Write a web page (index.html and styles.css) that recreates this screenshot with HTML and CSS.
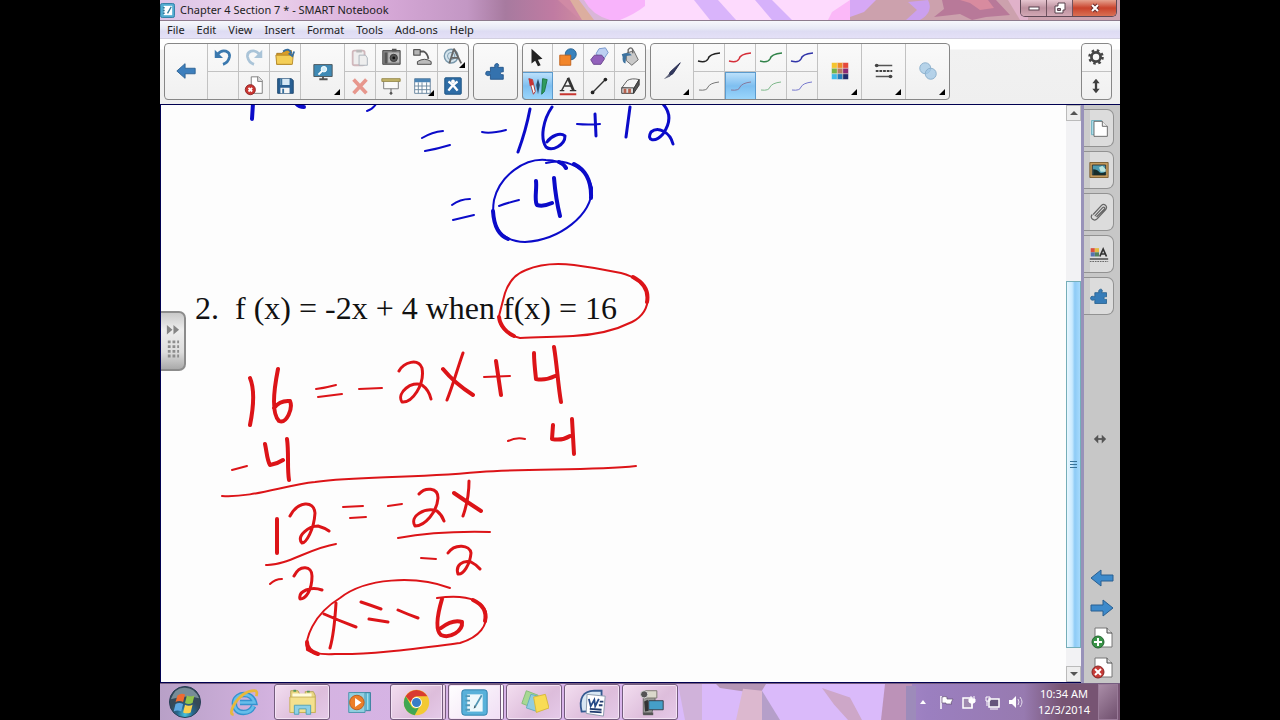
FILE: index.html
```html
<!DOCTYPE html>
<html lang="en">
<head>
<meta charset="utf-8">
<meta name="viewport" content="width=device-width, initial-scale=1">
<title>Chapter 4 Section 7 * - SMART Notebook</title>
<link rel="stylesheet" href="styles.css">
</head>
<body>
<div class="screen">
  <header class="titlebar">
    <svg class="wallpaper" viewBox="0 0 960 20" preserveAspectRatio="none" aria-hidden="true">
      <defs>
        <linearGradient id="sky"><stop offset="0" stop-color="#dcc3e6"/><stop offset=".1" stop-color="#edd6ee"/><stop offset=".23" stop-color="#d7a9d8"/><stop offset=".32" stop-color="#c397c4"/><stop offset=".36" stop-color="#a77a9f"/><stop offset=".41" stop-color="#c07ba2"/><stop offset=".46" stop-color="#d7959f"/></linearGradient>
      </defs>
      <path d="M0 0H960V20H0Z" fill="url(#sky)"/>
      <path d="M398 0H440L455 20H420Z" fill="#d08aa5"/>
      <path d="M410 0H500V20H422Z" fill="#dcae9f"/>
      <path d="M419 0H500V20H434Z" fill="#d9b6d8"/>
      <path d="M424 0H540V20H450Q432 15 424 0Z" fill="#f8b3fb"/>
      <path d="M485 0H850V20H460Q475 14 485 6Z" fill="#fddafd"/>
      <path d="M534 0H558L576 20H550Z" fill="#d9b4fb"/>
      <path d="M595 0H612L632 20H612Z" fill="#d6b1fb"/>
      <path d="M672 12L690 0H700V20H668Z" fill="#fbb8f8"/>
      <path d="M690 0H960V20H690Z" fill="#cca1ad"/>
      <path d="M690 0H716L704 12L690 17Z" fill="#d6a8f5"/>
      <path d="M748 2L768 0Q774 12 760 20H746L757 10Z" fill="#cba0ee"/>
      <path d="M782 0H836L850 15L826 17L812 20L800 14L774 17L784 9Z" fill="#b87999"/>
      <path d="M800 0L828 0L834 8L820 10L810 3Z" fill="#d88b9f"/>
      <path d="M848 0H868V20H860Z" fill="#e0b1c9"/>
    </svg>
    <svg class="title-icon" viewBox="0 0 16 16" aria-hidden="true"><rect x=".5" y=".5" width="15" height="15" rx="2" fill="#53add2" stroke="#307da4"/><path d="M4 3h9v10H4z" fill="#fff"/><path d="M3 5h2M3 8h2M3 11h2M8 11l4-7" stroke="#367b9c" stroke-width="1.5"/></svg>
    <h1 class="title">Chapter 4 Section 7 * - SMART Notebook</h1>
    <div class="window-buttons">
      <button class="winbtn" aria-label="Minimize"><svg viewBox="0 0 16 12"><rect x="3" y="5" width="10" height="3" fill="#fff" stroke="#59424f"/></svg></button>
      <button class="winbtn" aria-label="Restore"><svg viewBox="0 0 16 12"><path d="M6 1h7v7h-2v3H3V4h3z" fill="#fff" stroke="#59424f"/><path d="M5.500 6.500h3v2h-3z" fill="#a98b9b" stroke="#59424f"/></svg></button>
      <button class="winbtn close" aria-label="Close"><svg viewBox="0 0 16 12"><path d="M5 3l6 6M11 3l-6 6" stroke="#6b2b2b" stroke-width="4"/><path d="M5 3l6 6M11 3l-6 6" stroke="#fff" stroke-width="2"/></svg></button>
    </div>
  </header>

  <nav class="menubar" aria-label="Menu">
    <button>File</button><button>Edit</button><button>View</button><button>Insert</button><button>Format</button><button>Tools</button><button>Add-ons</button><button>Help</button>
  </nav>

  <div class="toolbar" role="toolbar" aria-label="Notebook tools">
    <div class="group group-main">
      <button class="tool tall" aria-label="Previous page"><svg viewBox="0 0 24 24"><path d="M2 12l9-8v5h11v6H11v5z" fill="#3d7fbd" stroke="#2c6193"/></svg></button>
      <button class="tool" aria-label="Undo"><svg viewBox="0 0 24 24"><path d="M6 9C12 2 20 6 19 12 18 17 15 19 12 20" fill="none" stroke="#3a78ae" stroke-width="3"/><path d="M3 4v9h9z" fill="#3a78ae"/></svg></button>
      <button class="tool" aria-label="Blank" disabled></button>
      <button class="tool" aria-label="Redo" disabled><svg viewBox="0 0 24 24"><path d="M18 9C12 2 4 6 5 12 6 17 9 19 12 20" fill="none" stroke="#aac4d8" stroke-width="3"/><path d="M21 4v9h-9z" fill="#aac4d8"/></svg></button>
      <button class="tool" aria-label="Delete page"><svg viewBox="0 0 24 24"><path d="M9 2h8l4 4v14H9z" fill="#fff" stroke="#777"/><path d="M16 2v5h5" fill="#ddd" stroke="#777"/><circle cx="8" cy="16" r="5.500" fill="#c93632" stroke="#8e2526"/><path d="M6 14l4 4m0-4l-4 4" stroke="#fff" stroke-width="2"/></svg></button>
      <button class="tool" aria-label="Open"><svg viewBox="0 0 24 24"><path d="M3 8h6l2-3h8v15H3z" fill="#d99d26" stroke="#a77a24"/><path d="M2 10h19l-1 10H3z" fill="#f4ce57" stroke="#b68b2c"/><path d="M10 6Q16 1 19 8m3-2l-2 5-4-3" fill="none" stroke="#386e9d" stroke-width="2"/></svg></button>
      <button class="tool" aria-label="Save"><svg viewBox="0 0 24 24"><path d="M4 4h15l2 2v14H4z" fill="#285f93" stroke="#1d456c"/><path d="M7 4h10v7H7z" fill="#d5e8f5"/><path d="M7 14h10v6H7z" fill="#f6f6f6"/><path d="M9 15h2v5H9zM7 4h2v7H7z" fill="#38719d"/></svg></button>
      <button class="tool tall drop" aria-label="View screens"><svg viewBox="0 0 24 24"><path d="M2 5h20v13H2z" fill="#3f8ab5" stroke="#4b5459"/><path d="M8 21h9M12 18v3" stroke="#555" stroke-width="2"/><circle cx="13" cy="10" r="3" fill="#d2effa" stroke="#fff"/><path d="M11 12l-4 4" stroke="#fff" stroke-width="2"/></svg></button>
      <button class="tool" aria-label="Paste" disabled><svg viewBox="0 0 24 24"><rect x="4" y="5" width="13" height="16" rx="2" fill="#eee" stroke="#d0b8bc" stroke-width="2"/><path d="M8 4h6v3H8z" fill="#b9b9b9"/><path d="M11 10h7l2 3v8h-9z" fill="#eee" stroke="#a8b1b9"/></svg></button>
      <button class="tool" aria-label="Delete" disabled><svg viewBox="0 0 24 24"><path d="M5 5l14 15M19 5L5 20" stroke="#e7978d" stroke-width="4"/></svg></button>
      <button class="tool" aria-label="Screen capture"><svg viewBox="0 0 24 24"><path d="M3 5h19v15H3z" fill="#858585" stroke="#444"/><path d="M5 7h3v12H5zM13 3h5v3h-5z" fill="#555"/><path d="M9 7h12v11H9z" fill="#b9b9b9"/><circle cx="15" cy="13" r="4" fill="#555" stroke="#393939"/><circle cx="15" cy="13" r="1.500" fill="#111"/></svg></button>
      <button class="tool" aria-label="Screen shade"><svg viewBox="0 0 24 24"><path d="M4 6h16v9H4z" fill="#fafafa" stroke="#777"/><path d="M2 4h20v3H2z" fill="#c4b56a" stroke="#96894c"/><path d="M12 15v6" stroke="#555"/><circle cx="12" cy="20" r="1.500" fill="#555"/></svg></button>
      <button class="tool" aria-label="Document camera"><svg viewBox="0 0 24 24"><path d="M9 6h5q4 2 5 8" fill="none" stroke="#555" stroke-width="2"/><rect x="3" y="4" width="7" height="6" fill="#b5b5b5" stroke="#333"/><path d="M7 17q8-5 15 0v3H7z" fill="#bbb" stroke="#444"/></svg></button>
      <button class="tool drop small" aria-label="Table"><svg viewBox="0 0 24 24"><path d="M4 4h17v16H4z" fill="#fff" stroke="#64819b"/><path d="M4 4h17v4H4z" fill="#4b84b5"/><path d="M4 12h17M4 16h17M8 8v12M12 8v12M17 8v12" stroke="#6a879e"/></svg></button>
      <button class="tool drop small" aria-label="Measurement tools"><svg viewBox="0 0 24 24"><circle cx="10" cy="11" r="7.500" fill="#d4e4ed" stroke="#7a99ad" stroke-width="1.500"/><circle cx="10" cy="11" r="4" fill="none" stroke="#7a99ad"/><path d="M13 3l-5 16M13 3l8 16M10 13h8" fill="none" stroke="#666" stroke-width="2"/></svg></button>
      <button class="tool" aria-label="Exchange"><svg viewBox="0 0 24 24"><rect x="3" y="3" width="18" height="18" rx="1" fill="#2e6da6" stroke="#1c5280"/><path d="M7 7q5 3 10 10M17 7q-5 3-10 10" fill="none" stroke="#fff" stroke-width="2.500"/><circle cx="12" cy="7" r="2" fill="#fff"/></svg></button>
    </div>
    <div class="group group-solo">
      <button class="tool tall" aria-label="Add-ons"><svg viewBox="0 0 24 24"><path d="M7 8h5c-2-4 4-6 4-2l-1 2h6v5c-4-1-4 4 0 3v5H7v-5c-2 2-6 1-5-2 0-2 3-2 5-1z" fill="#3472ae" stroke="#25578b"/></svg></button>
    </div>
    <div class="group group-tools">
      <button class="tool" aria-label="Select"><svg viewBox="0 0 24 24"><path d="M6 3l12 11-5 1 3 6-3 1-3-6-4 3z" fill="#222"/></svg></button>
      <button class="tool selected" aria-label="Pens" aria-pressed="true"><svg viewBox="0 0 24 24"><path d="M2 4l4 1 3 13-2 3z" fill="#fff" stroke="#a33"/><path d="M2 4l4 1 1 6-4 1z" fill="#c83535"/><path d="M12 4l2 7-2 10-2-10z" fill="#28506e"/><path d="M17 4l5 1-3 13-3 3z" fill="#2f9b5e" stroke="#1d7442"/></svg></button>
      <button class="tool" aria-label="Shapes"><svg viewBox="0 0 24 24"><circle cx="15" cy="9" r="6" fill="#3982bd" stroke="#286290"/><path d="M3 10h12v11H3z" fill="#f2862b" stroke="#bf601a"/></svg></button>
      <button class="tool" aria-label="Text"><svg viewBox="0 0 24 24"><path d="M5 17L12 4" fill="none" stroke="#333" stroke-width="1.500"/><path d="M12 3l6 14" stroke="#333" stroke-width="3"/><path d="M8 12h8M3 17h5m6 0h7" stroke="#333" stroke-width="1.500"/><path d="M3 21h18" stroke="#c73631" stroke-width="2"/></svg></button>
      <button class="tool" aria-label="Regular polygons"><svg viewBox="0 0 24 24"><path d="M12 3l7-1 3 5-4 6h-7L9 8z" fill="#bdd0f2" stroke="#7495ca"/><path d="M7 10h8l3 4-4 6H6l-3-5z" fill="#9261bb" stroke="#66418b"/></svg></button>
      <button class="tool" aria-label="Line"><svg viewBox="0 0 24 24"><path d="M5 19L19 5" stroke="#333" stroke-width="1.500"/><circle cx="5" cy="19" r="2" fill="#222"/><circle cx="19" cy="5" r="2" fill="#222"/></svg></button>
      <button class="tool" aria-label="Fill"><svg viewBox="0 0 24 24"><path d="M8 8l8-3 5 10-7 6-6-5z" fill="#c9c9c9" stroke="#666"/><path d="M10 8V4q3-4 5 0v4" fill="none" stroke="#666" stroke-width="1.500"/><path d="M3 9q8-3 11 1l-6 1-1 8q-4-1-3-7z" fill="#3e739f"/></svg></button>
      <button class="tool" aria-label="Eraser"><svg viewBox="0 0 24 24"><path d="M3 14L9 6q5-3 13-1l-6 10z" fill="#f5f5f5" stroke="#555"/><path d="M3 14h13v6H3z" fill="#ddd" stroke="#333"/><path d="M16 15l6-10v6l-6 9z" fill="#555" stroke="#333"/><path d="M5 15h3v5H5zM10 15h3v5h-3z" fill="#b66350"/></svg></button>
    </div>
    <div class="group group-pens">
      <button class="tool tall drop" aria-label="Pen type"><svg viewBox="0 0 24 24"><path d="M21 3L10 13l-2 5 5-3z" fill="#33395f" stroke="#22274d"/><path d="M9 15l-6 6 7-3z" fill="#62677d"/></svg></button>
      <button class="tool pen" aria-label="Black pen"><svg viewBox="0 0 24 24"><path d="M1 16q8 2 10-2 1-5 12-6" stroke="#222" fill="none" stroke-width="1.500"/></svg></button>
      <button class="tool pen" aria-label="Thin black pen"><svg viewBox="0 0 24 24"><path d="M2 16q8 1 9-3 2-4 11-5" stroke="#777" fill="none"/></svg></button>
      <button class="tool pen" aria-label="Red pen"><svg viewBox="0 0 24 24"><path d="M1 16q8 2 10-2 1-5 12-6" stroke="#d52e39" fill="none" stroke-width="1.500"/></svg></button>
      <button class="tool pen selected" aria-label="Thin red pen" aria-pressed="true"><svg viewBox="0 0 24 24"><path d="M2 16q8 1 9-3 2-4 11-5" stroke="#87799d" fill="none"/></svg></button>
      <button class="tool pen" aria-label="Green pen"><svg viewBox="0 0 24 24"><path d="M1 16q8 2 10-2 1-5 12-6" stroke="#32834a" fill="none" stroke-width="1.500"/></svg></button>
      <button class="tool pen" aria-label="Thin green pen"><svg viewBox="0 0 24 24"><path d="M2 16q8 1 9-3 2-4 11-5" stroke="#7eb88b" fill="none"/></svg></button>
      <button class="tool pen" aria-label="Blue pen"><svg viewBox="0 0 24 24"><path d="M1 16q8 2 10-2 1-5 12-6" stroke="#3135a9" fill="none" stroke-width="1.500"/></svg></button>
      <button class="tool pen" aria-label="Thin blue pen"><svg viewBox="0 0 24 24"><path d="M2 16q8 1 9-3 2-4 11-5" stroke="#7779ce" fill="none"/></svg></button>
      <button class="tool tall drop" aria-label="Color"><svg viewBox="0 0 24 24"><path d="M3 3h6v6H3z" fill="#f4c52d"/><path d="M9 3h6v6H9z" fill="#ee8a29"/><path d="M15 3h6v6h-6z" fill="#e5483b"/><path d="M3 9h6v6H3z" fill="#75b348"/><path d="M9 9h6v6H9z" fill="#b77965"/><path d="M15 9h6v6h-6z" fill="#8c2873"/><path d="M3 15h6v6H3z" fill="#40bbe9"/><path d="M9 15h6v6H9z" fill="#267bbb"/><path d="M15 15h6v6h-6z" fill="#202a6c"/><path d="M9 3v18M15 3v18M3 9h18M3 15h18" stroke="#f1dfc9" stroke-width=".6"/></svg></button>
      <button class="tool tall drop" aria-label="Line style"><svg viewBox="0 0 24 24"><path d="M3 6h18M3 18h18" stroke="#555" stroke-width="1.500"/><path d="M3 12h18" stroke="#444" stroke-width="2" stroke-dasharray="3 1"/><circle cx="4" cy="6" r="2" fill="#444"/><circle cx="19" cy="18" r="2" fill="#444"/></svg></button>
      <button class="tool tall drop" aria-label="Transparency"><svg viewBox="0 0 24 24"><circle cx="9" cy="9" r="6" fill="#b6d3e9" stroke="#8aaecb"/><circle cx="15" cy="15" r="6" fill="#9fc5e4" fill-opacity=".75" stroke="#8aaecb"/></svg></button>
    </div>
    <div class="group group-settings">
      <button class="tool" aria-label="Settings"><svg viewBox="0 0 24 24"><circle cx="12" cy="12" r="5" fill="none" stroke="#454545" stroke-width="3"/><circle cx="12" cy="12" r="7" fill="none" stroke="#454545" stroke-width="3" stroke-dasharray="2.700 2.800"/></svg></button>
      <button class="tool" aria-label="Move toolbar"><svg viewBox="0 0 24 24"><path d="M12 6v12" stroke="#3f3f3f" stroke-width="2.500"/><path d="M12 4l4 5H8zM12 20l4-5H8z" fill="#3f3f3f"/></svg></button>
    </div>
  </div>

  <div class="workspace">
    <main class="page">
      <button class="pull-tab" aria-label="Show page tab"><svg viewBox="0 0 16 40"><path d="M2 3l6 5-6 5zM9 3l6 5-6 5z" fill="#858585"/><path d="M3 21h12M3 26h12M3 31h12M3 36h12" stroke="#8d8d8d" stroke-width="3" stroke-dasharray="3 2"/></svg></button>
      <p class="problem">2.&nbsp; f (x) = -2x + 4 when f(x) = 16</p>
      <svg class="ink" viewBox="161 105 500 560" role="img" aria-label="Handwritten work">
        <g class="blue">
          <path class="bold" d="M253 103L252 119M295 102Q298 107 304 107M536 181C537 190 534 200 537 205Q543 207 552 203M554 178C555 190 557 204 560 216"/>
          <path class="medium" d="M530 109Q526 130 518 152M552 107C543 120 540 138 546 147C552 152 565 145 565 136C560 132 551 136 547 142M595 114L596 136M630 107L626 137M663 104C672 114 670 124 663 134C655 143 646 141 651 132C658 126 670 132 673 144"/>
          <path d="M376 104Q373 109 367 111M422 138Q432 132 443 131M425 151Q437 149 450 145M482 132Q490 134 506 130M577 124Q588 125 600 124M452 205Q460 199 470 199M453 220L474 215M499 206Q507 203 519 200"/>
          <path d="M546 163C568 157 588 170 592 188C592 215 560 240 525 242C500 241 490 225 494 200C500 175 525 158 546 160C555 160 562 163 566 168"/>
          <path class="bold" d="M559 162Q564 164 566 168M574 164Q592 173 591 198M493 211C494 227 500 236 508 239"/>
        </g>
        <g class="red">
          <path d="M505 293C509 281 515 274 526 270C540 264 558 263 574 265C590 267 607 270 621 273C634 276 647 285 648 296C648 306 644 316 632 322C614 331 595 335 573 336C552 337 536 337 520 338C509 336 498 327 499 316Q502 304 505 293"/>
          <path class="bold" d="M499 317C500 326 507 333 514 336M633 277Q650 286 647 302"/>
          <path class="bold" d="M250 378C255 390 253 410 250 425M278 369C275 384 270 412 279 421C287 424 293 408 290 401Q280 400 274 408M443 369C452 380 462 388 473 395M496 361L501 395M534 353C534 360 535 370 536 379Q545 381 555 376M554 347C557 365 558 385 561 402M265 444C267 453 267 460 270 465Q277 464 283 460M287 439C289 453 287 468 289 480M553 425L552 439Q562 441 570 436M572 419L574 454M277 519L277 553M454 493Q467 502 481 511"/>
          <path class="medium" d="M463 353C457 370 453 385 447 400M399 371C404 362 418 358 422 368C425 385 412 403 402 402C396 393 412 380 422 385Q429 390 431 399M290 516C298 501 314 500 315 513C314 530 306 543 302 543C296 536 309 526 318 526Q325 528 329 531M294 576C300 564 312 566 312 576C312 590 306 599 300 599C298 591 311 586 322 590M419 494C425 487 438 487 438 498C437 512 425 526 415 526C409 516 425 507 437 511Q442 515 444 521M469 481Q469 499 463 516M448 553C455 543 470 545 471 553C470 565 463 575 458 574C455 565 463 560 471 562Q477 565 480 569M324 614Q340 621 356 627M336 603C335 620 334 634 330 648M361 602Q370 605 381 609M398 610Q407 614 418 618M369 619L388 622"/>
          <path d="M316 389Q325 388 336 385M318 397L342 394M359 389L382 388M484 377L510 376M232 470L247 466M508 441Q516 437 525 439M343 507L363 506M350 518L366 517M388 506L402 504M270 584Q275 579 282 579M421 558L436 559"/>
          <path d="M222 496C252 498 285 485 315 482C361 476 400 479 480 472C530 468 590 471 636 466M266 565C286 566 310 548 336 544M398 538C425 533 450 531 490 532"/>
          <path d="M450 588C415 575 365 578 340 598C312 615 305 640 307 650Q315 655 335 654C370 655 420 648 460 643C480 637 488 625 486 612C480 597 460 595 437 598"/>
          <path class="bold" d="M307 642Q307 651 318 654M442 599C437 616 435 630 441 635C450 639 463 631 462 622Q453 619 441 628M473 600Q488 607 485 621"/>
        </g>
      </svg>
    </main>
    <div class="scrollbar">
      <button class="scroll-button" aria-label="Scroll up"><svg viewBox="0 0 8 8"><path d="M0 6l4-4 4 4z" fill="#555"/></svg></button>
      <div class="track-before"></div>
      <div class="thumb"><i class="grip"></i></div>
      <div class="track-after"></div>
      <button class="scroll-button" aria-label="Scroll down"><svg viewBox="0 0 8 8"><path d="M0 2l4 4 4-4z" fill="#555"/></svg></button>
    </div>
    <aside class="sidebar">
      <div class="tabs">
        <button class="tab" aria-label="Page sorter"><svg viewBox="0 0 24 24"><path d="M3 3h12v17H3z" fill="#a9dce9" stroke="#68aebe"/><path d="M6 4h10l6 6v12H6z" fill="#fff" stroke="#555"/><path d="M16 4v6h6" fill="#eee" stroke="#555"/></svg></button>
        <button class="tab" aria-label="Gallery"><svg viewBox="0 0 24 24"><path d="M1 3h22v18H1z" fill="#c39a5c" stroke="#745427"/><path d="M4 6h16v12H4z" fill="#4e9cb1" stroke="#2a2a2a"/><path d="M5 11q5 0 7 3t8 0v4H5z" fill="#172d2b"/><path d="M12 9l4-2 4 4v3h-6z" fill="#bbe4dc"/></svg></button>
        <button class="tab" aria-label="Attachments"><svg viewBox="0 0 24 24"><path d="M5 15L15 4c3-3 8 1 5 5L10 20c-4 4-10-1-6-5M7 17l9-10c2-2 4 0 2 2l-9 9" fill="none" stroke="#666" stroke-width="1.500"/></svg></button>
        <button class="tab" aria-label="Properties"><svg viewBox="0 0 24 24"><path d="M2 5h5v5H2z" fill="#dc503d"/><path d="M7 5h5v5H7z" fill="#e4bc42"/><path d="M2 10h5v5H2z" fill="#5773af"/><path d="M7 10h5v5H7z" fill="#548360"/><path d="M13 15l4-9 4 9M15 12h5" fill="none" stroke="#333" stroke-width="2"/><path d="M1 18h22" stroke="#333" stroke-width="1.500"/><path d="M1 21h22" stroke="#555" stroke-dasharray="2 1"/></svg></button>
        <button class="tab" aria-label="Add-ons tab"><svg viewBox="0 0 24 24"><path d="M7 8h5c-2-4 4-6 4-2l-1 2h6v5c-4-1-4 4 0 3v5H7v-5c-2 2-6 1-5-2 0-2 3-2 5-1z" fill="#367cb8" stroke="#28618f"/></svg></button>
      </div>
      <button class="resize" aria-label="Resize sidebar"><svg viewBox="0 0 16 12"><path d="M4 6h8" stroke="#555" stroke-width="2"/><path d="M6 1v10L1 6zM10 1v10l5-5z" fill="#555"/></svg></button>
      <div class="page-actions">
        <button aria-label="Go to previous page"><svg viewBox="0 0 24 24"><path d="M1 12l10-8v5h12v6H11v5z" fill="#3d8acb" stroke="#285f91"/></svg></button>
        <button aria-label="Go to next page"><svg viewBox="0 0 24 24"><path d="M23 12L13 4v5H1v6h12v5z" fill="#3d8acb" stroke="#285f91"/></svg></button>
        <button aria-label="Add page"><svg viewBox="0 0 24 24"><path d="M5 2h12l5 5v14H5z" fill="#fff" stroke="#777"/><path d="M17 2v5h5" fill="#ddd" stroke="#444"/><circle cx="8" cy="16" r="6" fill="#399347" stroke="#226430"/><path d="M8 12v8M4 16h8" stroke="#fff" stroke-width="2"/></svg></button>
        <button aria-label="Delete current page"><svg viewBox="0 0 24 24"><path d="M5 2h12l5 5v14H5z" fill="#fff" stroke="#777"/><path d="M17 2v5h5" fill="#ddd" stroke="#444"/><circle cx="8" cy="16" r="6" fill="#c63b37" stroke="#872725"/><path d="M5 13l6 6m0-6l-6 6" stroke="#fff" stroke-width="2"/></svg></button>
      </div>
    </aside>
  </div>

  <footer class="taskbar">
    <svg class="wallpaper" viewBox="0 0 960 37" preserveAspectRatio="none" aria-hidden="true">
      <defs><linearGradient id="bar"><stop offset="0" stop-color="#b8a0c7"/><stop offset=".12" stop-color="#d4b3e0"/><stop offset=".55" stop-color="#dab5ee"/><stop offset=".8" stop-color="#9b7fc0"/><stop offset=".9" stop-color="#977ab0"/><stop offset=".94" stop-color="#775473"/></linearGradient></defs>
      <path d="M0 0H960V37H0Z" fill="url(#bar)"/>
      <path d="M518 0H728V37H518Z" fill="#dabafa"/>
      <path d="M518 0H542V37H525Z" fill="#d0b2da"/>
      <path d="M556 0H606L600 10L560 4Z" fill="#b595b5"/>
      <path d="M583 5L602 7V37H576Z" fill="#dcb8cf"/>
      <path d="M602 7L620 37H602Z" fill="#b59fc9"/>
      <path d="M662 4L690 14L702 37H688L674 21Z" fill="#cda7c8"/>
      <path d="M725 0H752V37H721Z" fill="#bc92b8"/>
      <path d="M746 2H756V37H746Z" fill="#9d8bba"/>
    </svg>
    <div class="apps">
      <button class="app start" aria-label="Start"><svg viewBox="0 0 36 36"><defs><radialGradient id="orb" cy=".9"><stop stop-color="#46c5df"/><stop offset=".5" stop-color="#27678e"/><stop offset="1" stop-color="#354958"/></radialGradient></defs><circle cx="18" cy="18" r="16.500" fill="url(#orb)" stroke="#273f56"/><path d="M3 15Q8 2 18 3q10 0 15 11-14-4-30 1z" fill="#bad0d7" opacity=".5"/><path d="M10 11q4-3 8-1l-2 8q-4-2-8 0z" fill="#ef6b31"/><path d="M20 11q4 2 8 0l-2 8q-4 2-8 0z" fill="#91c44b"/><path d="M8 20q4-2 8 0l-2 8q-4-2-8 0z" fill="#5ea9e3"/><path d="M18 21q4 2 8 0l-2 8q-4 2-8 0z" fill="#fbd04f"/></svg></button>
      <button class="app" aria-label="Internet Explorer"><svg viewBox="0 0 32 32"><path d="M26 20q-3 7-11 7C7 27 4 21 5 15 7 5 24 4 27 16H11" fill="none" stroke="#3492cf" stroke-width="6"/><path d="M26 20q-3 7-11 7C7 27 4 21 5 15 7 5 24 4 27 16H11" fill="none" stroke="#65bdea" stroke-width="3"/><path d="M4 29Q-1 30 4 19 14 3 27 3q4 0 2 6" fill="none" stroke="#e8b83c" stroke-width="3"/></svg></button>
      <button class="app open" aria-label="File Explorer"><svg viewBox="0 0 32 32"><path d="M3 7V3h8l2 4h6V4h9l2 4v19H3z" fill="#ead783" stroke="#b5a354"/><path d="M5 6h21v6H5z" fill="#fffbdc"/><path d="M2 10h28v17H2z" fill="#f4e18e" stroke="#c7ae57"/><path d="M6 3h3M21 4h3" stroke="#55985b" stroke-width="2"/><path d="M7 29V19h18v10h-5v-6h-8v6z" fill="#8dd0e7" stroke="#4b9fb8"/></svg></button>
      <button class="app" aria-label="Media Player"><svg viewBox="0 0 32 32"><path d="M9 5h18v20H9z" fill="#5bb4d2" stroke="#377f9b"/><path d="M24 6v18M21 6v19" stroke="#c5f1fa"/><path d="M3 5h18v22H3z" fill="#90cfe0" stroke="#4692aa"/><circle cx="12" cy="16" r="8" fill="#ec7e28" stroke="#b8591e"/><path d="M10 11l7 5-7 5z" fill="#fff"/></svg></button>
      <button class="app open stacked" aria-label="Chrome"><svg viewBox="0 0 32 32"><circle cx="16" cy="16" r="14" fill="#f3c934"/><path d="M4 9A14 14 0 0128 9H16a6 6 0 00-5 8z" fill="#d93c30"/><path d="M4 9l7 12q3 3 8 0l-5 9A14 14 0 014 9z" fill="#41a653"/><circle cx="16" cy="16" r="6" fill="#fff"/><circle cx="16" cy="16" r="5" fill="#397dc7"/></svg></button>
      <button class="app open active stacked" aria-label="SMART Notebook"><svg viewBox="0 0 32 32"><rect x="2" y="2" width="28" height="28" rx="3" fill="#59b1da" stroke="#2b7da8"/><path d="M8 7h17v19H8z" fill="#eef8fc"/><path d="M6 9h5M6 14h5M6 19h5M6 24h5M17 20l7-12" stroke="#5297b5" stroke-width="2"/><path d="M15 23l1-4 2 2z" fill="#355b6b"/></svg></button>
      <button class="app open" aria-label="Sticky Notes"><svg viewBox="0 0 32 32"><path d="M7 3l13 5-5 14-13-5z" fill="#a8d893" stroke="#82bc75"/><path d="M12 7l12 3-5 16-12-4z" fill="#91cce0" stroke="#65aabc"/><path d="M15 10l13-3 4 15-14 5z" fill="#f9dc55" stroke="#d5b63a"/></svg></button>
      <button class="app open" aria-label="Word"><svg viewBox="0 0 32 32"><path d="M4 26Q-1 4 18 3h8v22z" fill="#d8e7f3" stroke="#345a91" stroke-width="2"/><path d="M10 7l20 2-2 22-19-3z" fill="#fff" stroke="#8796aa"/><path d="M12 12l2 8 4-7 1 7 4-8" fill="none" stroke="#264a87" stroke-width="2"/><path d="M13 23l13 1M13 26l13 1M24 15h4M23 19h4" stroke="#203b6e" stroke-width="2"/></svg></button>
      <button class="app open" aria-label="Recorder"><svg viewBox="0 0 32 32"><path d="M8 4h13v11l-4 14H8z" fill="#989895" stroke="#666"/><path d="M10 3h13v8H10z" fill="#dbd9cc" stroke="#77756d"/><circle cx="9" cy="7" r="4" fill="#555" stroke="#ddd"/><path d="M9 15l4-2 1 12-4 1z" fill="#333"/><path d="M14 14h16v10H14z" fill="#459fc8" stroke="#343c45"/><path d="M8 27h11v3H8z" fill="#555"/></svg></button>
    </div>
    <div class="tray">
      <button aria-label="Show hidden icons"><svg viewBox="0 0 16 16"><path d="M5 10l3-4 3 4z" fill="#fff"/></svg></button>
      <button aria-label="Action center"><svg viewBox="0 0 16 16"><path d="M3 2v13" stroke="#fff" stroke-width="1.500"/><path d="M4 3q3-1 5 0v2h6l-2 4 1 1H8V9H4z" fill="#fff" stroke="#665476" stroke-width=".7"/></svg></button>
      <button aria-label="Battery"><svg viewBox="0 0 16 16"><path d="M2 4h9v10H2z" fill="#9e89ae" stroke="#fff" stroke-width="1.500"/><path d="M8 5v3q3 3 6 0V5zM10 2v3M13 2v3M11 9v5" fill="#fff" stroke="#fff"/></svg></button>
      <button aria-label="Network"><svg viewBox="0 0 16 16"><path d="M5 5h10v8H5z" fill="#65557c" stroke="#fff" stroke-width="1.500"/><path d="M6 15h8M2 3h4v4H2zM3 7v5" fill="none" stroke="#fff"/></svg></button>
      <button aria-label="Volume"><svg viewBox="0 0 16 16"><path d="M2 6h3l4-4v12l-4-4H2z" fill="#fff"/><path d="M11 5q2 3 0 6M13 3q4 5 0 10" fill="none" stroke="#e5dded"/></svg></button>
    </div>
    <div class="clock"><time>10:34 AM</time><time>12/3/2014</time></div>
    <button class="show-desktop" aria-label="Show desktop"></button>
  </footer>
</div>
</body>
</html>
```
FILE: styles.css
```css
* { box-sizing: border-box; }
body { margin: 0; background: #000; font-family: "Noto Sans", "Open Sans", sans-serif; font-size: 11px; color: #222; }
button { margin: 0; padding: 0; border: 0; background: none; color: inherit; font: inherit; }
svg { display: block; }

.screen { width: 75%; height: 100vh; margin: 0 auto; display: flex; flex-direction: column; overflow: hidden; background: #f0f0f0; }
.wallpaper { position: absolute; inset: 0; width: 100%; height: 100%; z-index: -1; }

.titlebar { position: relative; z-index: 0; flex: none; height: 21px; display: flex; align-items: center; gap: 5px; border-bottom: 1px solid #8d7b8d; }
.title-icon { width: 15px; height: 15px; }
.title { margin: 0; font-size: 11px; line-height: 20px; font-weight: 400; white-space: nowrap; }
.window-buttons { margin: 0 3px 0 auto; align-self: flex-start; display: flex; height: 17px; overflow: hidden; border: 1px solid #5f4856; border-top: 0; border-radius: 0 0 5px 5px; }
.winbtn { width: 26px; display: grid; place-items: center; background: linear-gradient(#e6c6d0, #bd919f 50%, #d2a8b4); border-right: 1px solid #70535f; }
.winbtn svg { width: 16px; height: 12px; }
.winbtn.close { width: 43px; border: 0; background: linear-gradient(#e5a28f, #c9432c 50%, #d97054); }

.menubar { flex: none; height: 18px; display: flex; gap: 12px; padding-left: 7px; background: linear-gradient(#f7f8fc, #e7e9f5 45%, #dedcf3 60%, #e4e0f7); border-bottom: 1px solid #d2cfdf; line-height: 17px; }

.toolbar { flex: none; display: flex; gap: 4px; padding: 4px 8px 4px 4px; background: linear-gradient(#fff 10px, #f1f1f1 11px, #efefef); border-bottom: 1px solid #000050; }
.group { display: grid; grid-auto-flow: column; grid-template-rows: 29px 28px; border-radius: 4px; overflow: hidden; background: linear-gradient(#fafafa, #f0f0f0); position: relative; }
.group::after { content: ""; position: absolute; inset: 0; border: 1px solid #878787; border-radius: 4px; pointer-events: none; }
.group-main { grid-template-columns: 44px repeat(3, 31px) 44px repeat(4, 31px); }
.group-solo { grid-template-columns: 45px; }
.group-tools { grid-template-columns: repeat(4, 31px); }
.group-pens { grid-template-columns: 44px repeat(4, 31px) repeat(3, 44px); }
.group-settings { grid-template-columns: 31px; margin-left: auto; }
.tool { position: relative; display: grid; place-items: center; border-right: 1px solid #c2c2c2; border-bottom: 1px solid #c2c2c2; }
.tool svg { width: 22px; height: 22px; }
.tall { grid-row: span 2; }
.pen svg { width: 24px; height: 24px; }
.selected { background: linear-gradient(#bce0fb, #7ebff0 50%, #9ad5fb); border: 1px solid #5b9bce; }
.drop::after { content: ""; position: absolute; right: 4px; bottom: 4px; border: 3px solid transparent; border-right-color: #000; border-bottom-color: #000; }
.small::after { right: 3px; bottom: 3px; }

.workspace { flex: 1; min-height: 0; display: flex; background: #c7c7c7; }
.page { position: relative; flex: 1; overflow: hidden; background: #fdfdfd; border-left: 1px solid #000050; border-bottom: 1px solid #000050; }
.problem { position: absolute; left: 34px; top: 185px; margin: 0; font: 32px/36px "Liberation Serif", "Times New Roman", serif; color: #111; white-space: nowrap; }
.ink { position: absolute; left: 0; top: 0; width: 500px; height: 560px; overflow: visible; fill: none; stroke-linecap: round; stroke-linejoin: round; stroke-width: 2; }
.blue { stroke: #0b0bc9; }
.red { stroke: #dc1418; }
.medium { stroke-width: 3; }
.bold { stroke-width: 4; }
.pull-tab { position: absolute; left: 0; top: 206px; width: 25px; height: 60px; display: grid; place-items: center; background: linear-gradient(#c9c9c9, #eee 30%, #ddd 70%, #aaa); border: 2px solid #8c8c8c; border-left: 0; border-radius: 0 7px 7px 0; }
.pull-tab svg { width: 15px; height: 38px; }

.scrollbar { flex: none; width: 15px; display: flex; flex-direction: column; background: #f2f2f4; border-bottom: 1px solid #000050; }
.scroll-button { height: 16px; flex: none; display: grid; place-items: center; background: #eee; border: 1px solid #bbb; }
.scroll-button svg { width: 8px; height: 8px; }
.track-before { flex: 160; }
.thumb { flex: 366; display: grid; place-items: center; background: linear-gradient(90deg, #e9f7ff, #c9eaff 40%, #8dcbf6 60%, #a6dafd); border: 1px solid #75aeb9; }
.grip { width: 7px; height: 7px; background: repeating-linear-gradient(#397399 0 1px, transparent 1px 3px); }
.track-after { flex: 18; }

.sidebar { flex: none; width: 39px; display: flex; flex-direction: column; justify-content: space-between; border-left: 3px solid #9892b9; padding-top: 4px; }
.tabs { display: grid; gap: 4px; width: 30px; }
.tab { height: 38px; display: grid; place-items: center; border: 1px solid #929292; border-left: 0; border-radius: 0 7px 7px 0; background: linear-gradient(90deg, #ccc 20%, #dcdcdc 21%); }
.tab svg { width: 20px; height: 20px; }
.resize { height: 16px; display: grid; place-items: center; padding-right: 4px; }
.resize svg { width: 14px; height: 12px; }
.page-actions { display: grid; }
.page-actions button { height: 30px; display: grid; place-items: center; }
.page-actions svg { width: 24px; height: 24px; }

.taskbar { position: relative; z-index: 0; flex: none; height: 37px; display: flex; border-top: 1px solid #755d80; color: #fff; }
.apps { display: flex; gap: 2px; }
.app { width: 56px; display: grid; place-items: center; border: 1px solid transparent; border-radius: 3px; }
.app svg { width: 29px; height: 29px; }
.app.start { width: 54px; padding-right: 4px; }
.app.start svg { width: 34px; height: 34px; }
.open { border-color: #745c7d; background: linear-gradient(135deg, #f3def0, #ddbddb 60%, #e5cae9); box-shadow: inset 0 0 0 1px #f4e3f5; }
.stacked { border-right: 4px double #745c7d; }
.active { background: linear-gradient(135deg, #fff, #f0def4); }
.tray { margin-left: auto; display: flex; gap: 5px; padding-right: 10px; }
.tray button { width: 18px; display: grid; place-items: center; }
.tray svg { width: 16px; height: 16px; }
.clock { width: 60px; display: flex; flex-direction: column; justify-content: center; line-height: 16px; text-align: center; }
.show-desktop { width: 20px; margin: 0 2px 0 4px; border: 1px solid #9a7b99; background: linear-gradient(135deg, #a98ca7, #70506e); }
```
